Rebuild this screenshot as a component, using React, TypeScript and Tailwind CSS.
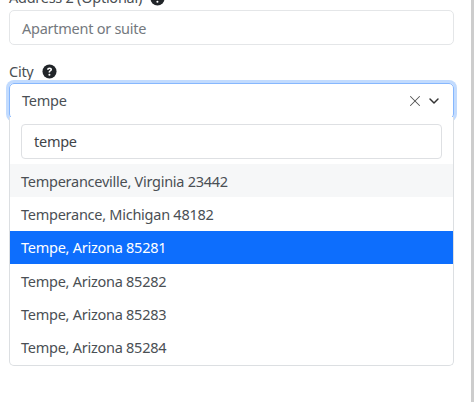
import { ChevronDown, X } from "lucide-react";

// Bootstrap style help badge
function HelpIcon() {
  return (
    <svg width="15" height="15" viewBox="0 0 16 16" className="ml-2 shrink-0" fill="#212529">
      <circle cx="8" cy="8" r="7.5" />
      <path
        d="M5.4 6.1c0-1.6 1.1-2.5 2.7-2.5 1.5 0 2.6.9 2.6 2.2 0 1-.5 1.5-1.3 2-.6.4-.8.6-.8 1.2H7c0-1.1.4-1.6 1.1-2.1.6-.4.9-.6.9-1 0-.4-.4-.7-.9-.7-.6 0-1 .4-1 1H5.4z"
        fill="#fff"
      />
      <circle cx="7.9" cy="11.4" r="1.1" fill="#fff" />
    </svg>
  );
}

const options = [
  { label: "Temperanceville, Virginia 23442", state: "hover" },
  { label: "Temperance, Michigan 48182", state: "" },
  { label: "Tempe, Arizona 85281", state: "active" },
  { label: "Tempe, Arizona 85282", state: "" },
  { label: "Tempe, Arizona 85283", state: "" },
  { label: "Tempe, Arizona 85284", state: "" },
];

export default function App() {
  return (
    <div className="flex h-[402px] w-[474px] overflow-hidden bg-white font-['Noto_Sans',sans-serif] text-[14.5px] tracking-[-0.26px] text-[#4a4f54]">
      <div className="-mt-[14px] min-w-0 flex-1 pl-[9px] pr-[16.5px]">
        {/* Address 2 */}
        <div className="flex h-[24px] items-center">
          <span>Address 2 (Optional)</span>
          <HelpIcon />
        </div>
        <div className="flex h-[35px] items-center rounded-[5px] border border-[#e4e6e8] px-3 pt-[2px] text-[#74797e]">
          Apartment or suite
        </div>

        {/* City */}
        <div className="mt-[15px] flex h-[23px] items-center">
          <span>City</span>
          <HelpIcon />
        </div>
        <div className="relative">
          <div className="flex h-[36px] items-center justify-between rounded-[5px] border border-[#86b7fe] px-3 pr-[11px] shadow-[0_0_0_3px_#c2dbfe]">
            <span>Tempe</span>
            <span className="flex items-center gap-[2px]">
              <X size={18} strokeWidth={1.4} className="text-[#555]" />
              <ChevronDown size={16} strokeWidth={2.2} className="text-[#333]" />
            </span>
          </div>
          {/* Dropdown */}
          <div className="absolute left-0 right-0 top-[34px] rounded-b-[5px] border border-t-0 border-[#dcdfe2] bg-white">
            <div className="px-[11px] pb-[5px] pt-[7px]">
              <div className="flex h-[35px] items-center rounded-[4px] border border-[#dee0e3] px-3 text-[#3f4448]">
                tempe
              </div>
            </div>
            {options.map((o) => (
              <div
                key={o.label}
                className={
                  o.state === "active"
                    ? "flex h-[33.3px] items-center bg-[#0d6efd] px-[11px] pt-[2px] text-white"
                    : o.state === "hover"
                      ? "flex h-[33.3px] items-center bg-[#f6f7f8] px-[11px] pt-[2px]"
                      : "flex h-[33.3px] items-center px-[11px] pt-[2px]"
                }
              >
                {o.label}
              </div>
            ))}
            <div className="h-[1px]" />
          </div>
        </div>
      </div>
      {/* page scrollbar edge */}
      <div className="w-[3.5px] shrink-0 bg-[#cdcdcd]" />
    </div>
  );
}
